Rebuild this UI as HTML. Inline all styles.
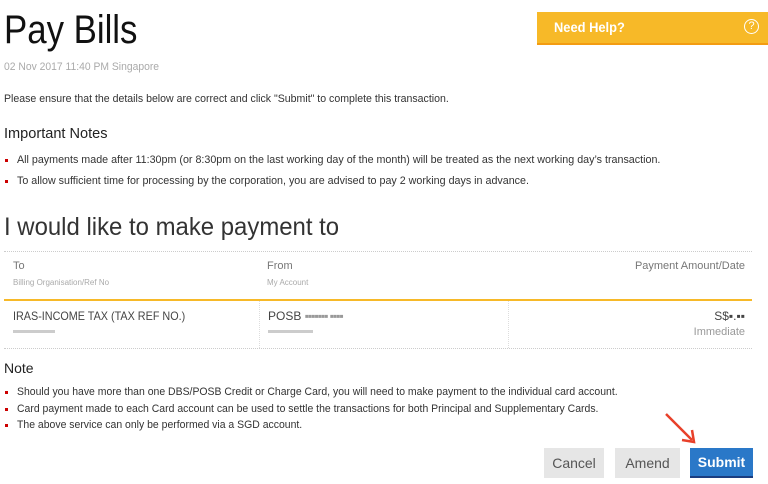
<!DOCTYPE html>
<html><head><style>
*{margin:0;padding:0;box-sizing:border-box}
body{width:768px;height:484px;background:#fff;font-family:"Liberation Sans",sans-serif;color:#333;position:relative;overflow:hidden}
.a{position:absolute;white-space:nowrap;transform-origin:left top}
.b{position:absolute;left:5px;width:3px;height:3px;background:#c00}
</style></head><body>
<div class="a" style="left:4px;top:8px;font-size:40px;color:#111;transform:scaleX(0.87)">Pay Bills</div>
<div class="a" style="left:537px;top:12px;width:231px;height:33px;background:#f7b928;border-bottom:2px solid #f39c12"></div>
<div class="a" style="left:554px;top:19px;font-size:14px;color:#fff;font-weight:bold;transform:scaleX(0.92)">Need Help?</div>
<div class="a" style="left:744px;top:19px;width:15px;height:15px;border:1.5px solid #fff;border-radius:50%;color:#fff;font-size:11px;text-align:center;line-height:12px">?</div>
<div class="a" style="left:4px;top:61px;font-size:11px;color:#aaa;transform:scaleX(0.94)">02 Nov 2017 11:40 PM Singapore</div>
<div class="a" style="left:4px;top:93px;font-size:11px;transform:scaleX(0.96)">Please ensure that the details below are correct and click "Submit" to complete this transaction.</div>
<div class="a" style="left:4px;top:125px;font-size:15px;color:#222;transform:scaleX(0.97)">Important Notes</div>
<div class="b" style="top:159px"></div><div class="a" style="left:17px;top:154px;font-size:11px;transform:scaleX(0.974)">All payments made after 11:30pm (or 8:30pm on the last working day of the month) will be treated as the next working day’s transaction.</div>
<div class="b" style="top:180px"></div><div class="a" style="left:17px;top:175px;font-size:11px;transform:scaleX(0.974)">To allow sufficient time for processing by the corporation, you are advised to pay 2 working days in advance.</div>
<div class="a" style="left:4px;top:213px;font-size:25px;color:#333;transform:scaleX(0.957)">I would like to make payment to</div>
<div class="a" style="left:4px;top:251px;width:748px;border-top:1px dotted #ccc"></div>
<div class="a" style="left:13px;top:260px;font-size:11px;color:#777">To</div>
<div class="a" style="left:13px;top:278px;font-size:8px;color:#aaa">Billing Organisation/Ref No</div>
<div class="a" style="left:267px;top:260px;font-size:11px;color:#777">From</div>
<div class="a" style="left:267px;top:278px;font-size:8px;color:#aaa">My Account</div>
<div class="a" style="left:600px;top:260px;width:145px;text-align:right;font-size:11px;color:#777">Payment Amount/Date</div>
<div class="a" style="left:4px;top:299px;width:748px;border-top:2px solid #f7b928"></div>
<div class="a" style="left:259px;top:301px;height:47px;border-left:1px dotted #ddd"></div>
<div class="a" style="left:508px;top:301px;height:47px;border-left:1px dotted #ddd"></div>
<div class="a" style="left:13px;top:309px;font-size:12px;color:#444;transform:scaleX(0.9)">IRAS-INCOME TAX (TAX REF NO.)</div>
<div class="a" style="left:13px;top:330px;width:42px;height:3px;background:#ccc"></div>
<div class="a" style="left:268px;top:309px;font-size:12px;color:#444">POSB <span style="color:#999;letter-spacing:-1px">▪▪▪▪▪▪▪ ▪▪▪▪</span></div>
<div class="a" style="left:268px;top:330px;width:45px;height:3px;background:#ccc"></div>
<div class="a" style="left:600px;top:309px;width:145px;text-align:right;font-size:12px;color:#444">S$▪.▪▪</div>
<div class="a" style="left:600px;top:326px;width:145px;text-align:right;font-size:11px;color:#999">Immediate</div>
<div class="a" style="left:4px;top:348px;width:748px;border-top:1px dotted #ccc"></div>
<div class="a" style="left:4px;top:360px;font-size:14px;color:#222">Note</div>
<div class="b" style="top:391px"></div><div class="a" style="left:17px;top:386px;font-size:11px;transform:scaleX(0.95)">Should you have more than one DBS/POSB Credit or Charge Card, you will need to make payment to the individual card account.</div>
<div class="b" style="top:408px"></div><div class="a" style="left:17px;top:403px;font-size:11px;transform:scaleX(0.95)">Card payment made to each Card account can be used to settle the transactions for both Principal and Supplementary Cards.</div>
<div class="b" style="top:424px"></div><div class="a" style="left:17px;top:419px;font-size:11px;transform:scaleX(0.95)">The above service can only be performed via a SGD account.</div>
<svg class="a" style="left:660px;top:410px" width="40" height="36"><path d="M6 4 L32 30" stroke="#e8402a" stroke-width="2.5"/><path d="M22 30 L34 32 L32 20" stroke="#e8402a" stroke-width="2.5" fill="none"/></svg>
<div class="a" style="left:544px;top:448px;width:60px;height:30px;background:#e6e6e6;font-size:14px;color:#555;text-align:center;line-height:30px">Cancel</div>
<div class="a" style="left:615px;top:448px;width:65px;height:30px;background:#e6e6e6;font-size:14px;color:#555;text-align:center;line-height:30px">Amend</div>
<div class="a" style="left:690px;top:448px;width:63px;height:30px;background:#2a78c8;border-bottom:2px solid #1a3d80;font-size:14px;font-weight:bold;color:#fff;text-align:center;line-height:29px">Submit</div>
</body></html>
